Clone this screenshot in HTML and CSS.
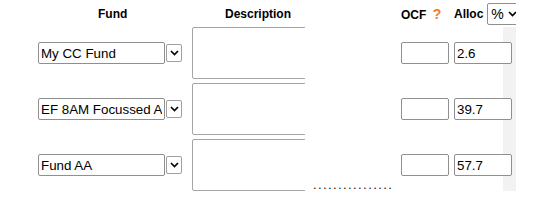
FILE: index.html
```html
<!DOCTYPE html>
<html lang="en">
<head>
  <meta charset="UTF-8" />
  <title>Fund allocation</title>
  <link rel="stylesheet" href="styles.css">
</head>
<body>
  <div class="table">
    <div class="grid head">
      <div class="fund-head">Fund</div>
      <div class="desc-head">Description</div>
      <div></div>
      <div class="ocf-head">OCF <span class="help">?</span></div>
      <div class="alloc-head">Alloc
        <span class="unit">%
          <svg width="9" height="6" viewBox="0 0 9 6"><path d="M1 1l3.5 3.5L8 1" fill="none" stroke="#000" stroke-width="1.6"/></svg>
        </span>
      </div>
    </div>

    <div class="grid rows">
      <div class="fund">
        <input class="fund-name" type="text" value="My CC Fund">
        <span class="drop"><svg width="9" height="6" viewBox="0 0 9 6"><path d="M1 1l3.5 3.5L8 1" fill="none" stroke="#000" stroke-width="1.6"/></svg></span>
      </div>
      <div class="desc"><textarea></textarea></div>
      <div class="spacer"></div>
      <div class="ocf"><input type="text"></div>
      <div class="alloc"><input type="text" value="2.6"></div>

      <div class="fund">
        <input class="fund-name" type="text" value="EF 8AM Focussed Asia">
        <span class="drop"><svg width="9" height="6" viewBox="0 0 9 6"><path d="M1 1l3.5 3.5L8 1" fill="none" stroke="#000" stroke-width="1.6"/></svg></span>
      </div>
      <div class="desc"><textarea></textarea></div>
      <div class="spacer"></div>
      <div class="ocf"><input type="text"></div>
      <div class="alloc"><input type="text" value="39.7"></div>

      <div class="fund">
        <input class="fund-name" type="text" value="Fund AA">
        <span class="drop"><svg width="9" height="6" viewBox="0 0 9 6"><path d="M1 1l3.5 3.5L8 1" fill="none" stroke="#000" stroke-width="1.6"/></svg></span>
      </div>
      <div class="desc"><textarea></textarea></div>
      <div class="spacer"><span class="dots">................</span></div>
      <div class="ocf"><input type="text"></div>
      <div class="alloc"><input type="text" value="57.7"></div>
    </div>
  </div>
</body>
</html>
```

FILE: styles.css
```css
body {
  margin: 0;
  font-family: 'Liberation Sans', Arial, sans-serif;
  background: #fff;
  color: #000;
}
.table {
  width: 516px;
  overflow: hidden;
}
.grid {
  display: grid;
  grid-template-columns: 190px 115px 94px 53px 64px;
}
.head {
  height: 27px;
  font-size: 12px;
  font-weight: bold;
  align-items: center;
}
.fund-head {
  padding-left: 98px;
}
.desc-head {
  padding-left: 35px;
}
.ocf-head {
  padding-left: 2px;
  white-space: nowrap;
}
.help {
  color: #f47a20;
  font-size: 14px;
  margin-left: 3px;
}
.alloc-head {
  padding-left: 2px;
  display: flex;
  align-items: center;
  white-space: nowrap;
}
.unit {
  display: flex;
  align-items: center;
  gap: 4px;
  margin-left: 4px;
  height: 20px;
  padding: 0 8px 0 3px;
  border: 1px solid #8f8f8f;
  border-radius: 2px;
  font-size: 14px;
  font-weight: normal;
}
.rows {
  grid-auto-rows: 52px;
  row-gap: 4px;
  height: 164px;
  background: linear-gradient(to right, #fff 503px, #f2f2f2 503px);
}
.fund {
  display: flex;
  align-items: center;
  padding-left: 38px;
}
input {
  box-sizing: border-box;
  height: 22px;
  margin: 0;
  padding: 1px 2px;
  border: 1px solid #8f8f8f;
  border-radius: 2px;
  font-family: 'Liberation Sans', Arial, sans-serif;
  font-size: 13.33px;
  color: #000;
  background: #fff;
}
.fund-name {
  width: 127px;
}
.drop {
  display: flex;
  align-items: center;
  justify-content: center;
  box-sizing: border-box;
  width: 16px;
  height: 18px;
  margin-left: 1px;
  border: 1px solid #a0a0a0;
  border-radius: 2px;
  background: #fff;
}
.desc {
  overflow: hidden;
  padding-left: 2px;
}
textarea {
  box-sizing: border-box;
  display: block;
  width: 130px;
  height: 52px;
  margin: 0;
  border: 1px solid #a5a5a5;
  border-radius: 2px;
  resize: none;
}
.spacer {
  display: flex;
  align-items: flex-end;
  padding-left: 8px;
}
.dots {
  font-size: 13px;
  line-height: 13px;
  letter-spacing: 1.4px;
  color: #111;
}
.ocf,
.alloc {
  display: flex;
  align-items: center;
  padding-left: 2px;
}
.ocf input {
  width: 48px;
}
.alloc input {
  width: 58px;
}
```
